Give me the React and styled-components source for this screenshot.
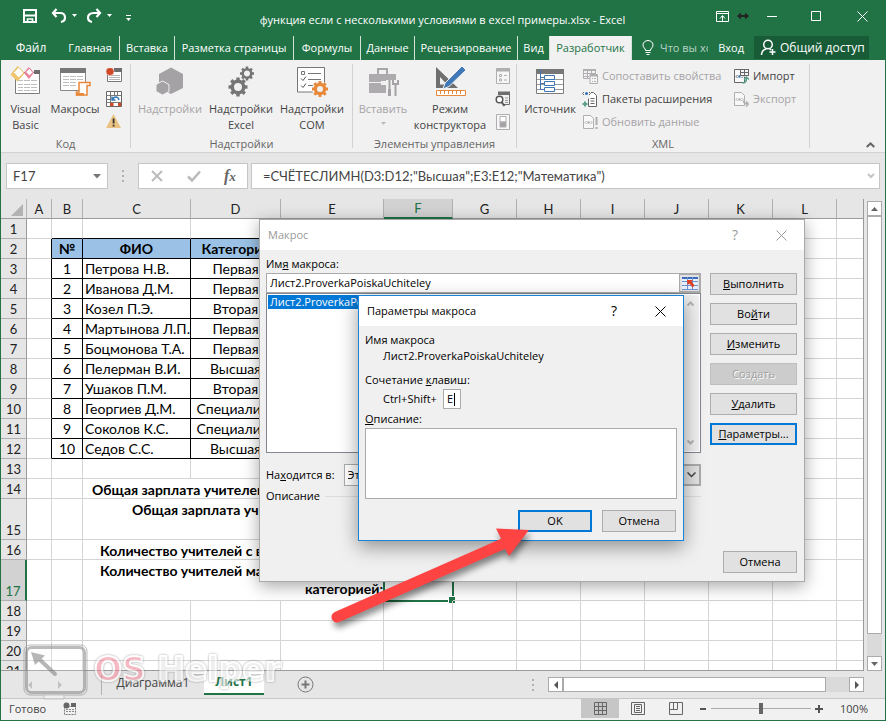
import React from "react";
import styled, { createGlobalStyle, css } from "styled-components";

const uiFont = `"Open Sans", "Noto Sans", sans-serif`;
const cellFont = `Lato, "Open Sans", sans-serif`;

const columns = [
  { name: "A", width: 25 },
  { name: "B", width: 31 },
  { name: "C", width: 108 },
  { name: "D", width: 90 },
  { name: "E", width: 103 },
  { name: "F", width: 69 },
  { name: "G", width: 64 },
  { name: "H", width: 64 },
  { name: "I", width: 64 },
  { name: "J", width: 64 },
  { name: "K", width: 64 },
  { name: "L", width: 64 },
];

const teachers = [
  ["Петрова Н.В.", "Первая"],
  ["Иванова Д.М.", "Первая"],
  ["Козел П.Э.", "Вторая"],
  ["Мартынова Л.П.", "Первая"],
  ["Боцмонова Т.А.", "Первая"],
  ["Пелерман В.И.", "Высшая"],
  ["Ушаков П.М.", "Вторая"],
  ["Георгиев Д.М.", "Специалист"],
  ["Соколов К.С.", "Специалист"],
  ["Седов С.С.", "Высшая"],
];

const totals = [
  { row: 14, height: 20, indent: 9, text: "Общая зарплата учителей" },
  { row: 15, height: 41, indent: 49, text: "Общая зарплата учителей" },
  { row: 16, height: 20, indent: 17, text: "Количество учителей с высшей" },
  {
    row: 17,
    height: 41,
    indent: 17,
    text: "Количество учителей математики",
    tail: "категорией:",
    value: "3",
  },
];

const tabs = [
  { name: "Главная", width: 59 },
  { name: "Вставка", width: 55 },
  { name: "Разметка страницы", width: 119 },
  { name: "Формулы", width: 67 },
  { name: "Данные", width: 54 },
  { name: "Рецензирование", width: 103 },
  { name: "Вид", width: 32 },
  { name: "Разработчик", width: 82, active: true },
];

const App = () => {
  return (
    <>
      <GlobalStyle />
      <Window>
        <TitleBar />
        <TabBar />
        <Ribbon />
        <FormulaBar />
        <Sheet />
        <SheetTabs />
        <StatusBar />
        <MacroDialog />
        <OptionsDialog />
        <Watermark />
        <PointerArrow />
      </Window>
    </>
  );
};

export default App;

/* ---------- title and tabs ---------- */

const TitleBar = () => (
  <Title>
    <QuickAccess>
      <IconButton aria-label="Сохранить">
        <svg width="16" height="16" viewBox="0 0 16 16" fill="none" stroke="#fff">
          <path d="M2 2h12v12H2z" strokeWidth="2" />
          <path d="M3 7.500h10" strokeWidth="2" />
          <path d="M5.500 15v-4h5v4" strokeWidth="1.600" />
        </svg>
      </IconButton>
      <IconButton aria-label="Отменить">
        <svg width="26" height="16" viewBox="0 0 26 16" fill="none" stroke="#fff">
          <path d="M6.500 1L3 5l3.500 4" strokeWidth="2.200" />
          <path d="M3 5h7c3.500 0 5 2 5 4.500 0 2.500-1.500 4-4 4.500" strokeWidth="2.200" />
          <path d="M22 6h5l-2.500 3z" fill="#fff" stroke="none" />
        </svg>
      </IconButton>
      <IconButton aria-label="Вернуть">
        <svg width="26" height="16" viewBox="0 0 26 16" fill="none" stroke="#fff">
          <path d="M8.500 1L12 5 8.500 9" strokeWidth="2.200" />
          <path d="M12 5H5.500C2 5 0 7 0 9.500 0 12 1.500 13.500 4 14" strokeWidth="2.200" />
          <path d="M19 6h5l-2.500 3z" fill="#fff" stroke="none" />
        </svg>
      </IconButton>
      <IconButton aria-label="Настройка панели">
        <svg width="7" height="16" viewBox="0 0 7 16">
          <path d="M0 7h5v1H0zM0 10h5l-2.500 3z" fill="#fff" />
        </svg>
      </IconButton>
    </QuickAccess>
    <Caption>функция если с несколькими условиями в excel примеры.xlsx - Excel</Caption>
    <WindowButtons>
      <svg width="14" height="11" viewBox="0 0 14 11" fill="none" stroke="#fff">
        <path d="M.5.5h12v10H.5zM0 2.500h13M6.500 10V5M4 7.500l2.500-3 2.500 3" />
      </svg>
      <svg width="12" height="8" viewBox="0 0 12 8" fill="#222">
        <path d="M0 4l4-3.500v2.500h4V.5L12 4 8 7.500V5H4v2.500z" />
      </svg>
      <IconButton aria-label="Свернуть" $width={42}>
        <svg width="10" height="12" stroke="#fff">
          <path d="M0 6.500h10" />
        </svg>
      </IconButton>
      <IconButton aria-label="Развернуть" $width={46}>
        <svg width="10" height="10" stroke="#fff" fill="none">
          <path d="M.5.5h9v9h-9z" />
        </svg>
      </IconButton>
      <IconButton aria-label="Закрыть" $width={46}>
        <svg width="11" height="11" stroke="#fff" fill="none">
          <path d="M.5.5l10 10M10.500.5l-10 10" />
        </svg>
      </IconButton>
    </WindowButtons>
  </Title>
);

const TabBar = () => (
  <TabRow>
    <FileTab>Файл</FileTab>
    {tabs.map((tab) => (
      <Tab key={tab.name} $width={tab.width} $active={tab.active}>
        {tab.name}
      </Tab>
    ))}
    <TellMe>
      <svg width="12" height="16" viewBox="0 0 12 16" fill="none" stroke="#fff">
        <path d="M3.500 10.500C3.500 8 1 8 1 5a5 4.500 0 0 1 10 0c0 3-2.500 3-2.500 5.500zM3.500 12.500h5M4.500 14.500h3" />
      </svg>
      <TellMeInput aria-label="Что вы хотите сделать?" placeholder="Что вы хотите сделать?" />
    </TellMe>
    <SignIn>Вход</SignIn>
    <Share>
      <svg width="17" height="17" viewBox="0 0 17 17" fill="none" stroke="#fff" strokeWidth="1.500">
        <circle cx="8" cy="5.500" r="4.300" />
        <path d="M1.500 16c0-3.500 2-5.500 5-6.300M9.500 9.500l1.500 1.500M12.500 10v6M9.500 13h6" />
      </svg>
      Общий доступ
    </Share>
  </TabRow>
);

/* ---------- ribbon ---------- */

const Ribbon = () => (
  <RibbonBar>
    <Group $width={129} $pad={3}>
      <GroupBody>
        <BigButton $width={43}>
          <VisualBasicIcon />
          Visual Basic
        </BigButton>
        <BigButton $width={56}>
          <MacrosIcon />
          Макросы
        </BigButton>
        <SmallColumn>
          <IconButton aria-label="Запись макроса">
            <RecordIcon />
          </IconButton>
          <IconButton aria-label="Относительные ссылки">
            <RelativeIcon />
          </IconButton>
          <IconButton aria-label="Безопасность макросов">
            <WarningIcon />
          </IconButton>
        </SmallColumn>
      </GroupBody>
      <GroupName>Код</GroupName>
    </Group>
    <Divider />
    <Group $width={221} $pad={3}>
      <GroupBody>
        <BigButton $width={72} disabled>
          <AddinsIcon />
          Надстройки
        </BigButton>
        <BigButton $width={70}>
          <GearsIcon />
          Надстройки Excel
        </BigButton>
        <BigButton $width={72}>
          <ComIcon />
          Надстройки COM
        </BigButton>
      </GroupBody>
      <GroupName>Надстройки</GroupName>
    </Group>
    <Divider />
    <Group $width={163} $pad={5}>
      <GroupBody>
        <BigButton $width={50} disabled>
          <ToolboxIcon />
          Вставить
          <svg width="7" height="12" viewBox="0 0 7 12">
            <path d="M1 5h5L3.500 8z" fill="#bbb" />
          </svg>
        </BigButton>
        <BigButton $width={84}>
          <DesignIcon />
          Режим конструктора
        </BigButton>
        <SmallColumn>
          <IconButton aria-label="Свойства">
            <PropertiesIcon />
          </IconButton>
          <IconButton aria-label="Просмотр кода">
            <CodeIcon />
          </IconButton>
          <IconButton aria-label="Диалоговое окно">
            <RunDialogIcon />
          </IconButton>
        </SmallColumn>
      </GroupBody>
      <GroupName>Элементы управления</GroupName>
    </Group>
    <Divider />
    <Group $width={292} $pad={5}>
      <GroupBody>
        <BigButton $width={56}>
          <SourceIcon />
          Источник
        </BigButton>
        <ListColumn $width={147}>
          <ListButton disabled>
            <MapIcon />
            Сопоставить свойства
          </ListButton>
          <ListButton>
            <PackIcon />
            Пакеты расширения
          </ListButton>
          <ListButton disabled>
            <XmlFileIcon color="#b1aeb1" mark="alert" />
            Обновить данные
          </ListButton>
        </ListColumn>
        <ListColumn $width={70}>
          <ListButton>
            <XmlFileIcon color="#666" accent="#5aa287" mark="import" />
            Импорт
          </ListButton>
          <ListButton disabled>
            <XmlFileIcon color="#b1aeb1" mark="export" />
            Экспорт
          </ListButton>
        </ListColumn>
      </GroupBody>
      <GroupName>XML</GroupName>
    </Group>
    <Divider />
    <CollapseButton aria-label="Свернуть ленту">
      <svg width="9" height="6" viewBox="0 0 9 6" fill="none" stroke="#666" strokeWidth="2">
        <path d="M.7 5l3.800-3.600L8.300 5" />
      </svg>
    </CollapseButton>
  </RibbonBar>
);

const VisualBasicIcon = () => (
  <svg width="32" height="32" viewBox="0 0 32 32" fill="none">
    <path d="M5.500 6.500h24v21h-24z" fill="#fff" stroke="#7d7d7d" />
    <path d="M24 4h6v4h-6z" fill="#6d6d6d" />
    <path d="M8 14.500h19M8 18.500h19M8 21.500h19M8 24.500h19" stroke="#bdbdbd" />
    <path d="M13.500 9v16M20.500 9v16" stroke="#fff" />
    <path d="M7.500 0l7 7.500-7 8-7-7z" fill="#f1c56d" />
    <path d="M8.500 1l5.500 6-5.500 5-5-5.500z" fill="#fff" stroke="#e9bf6a" />
    <path d="M18.500 1l5 6-4.500 6-5-6z" fill="#ee8095" />
    <path d="M19.500 2l3.500 4.500-3.500 3.500-4-4z" fill="#fff" stroke="#e8738c" />
  </svg>
);

const MacrosIcon = () => (
  <svg width="32" height="32" viewBox="0 0 32 32" fill="none">
    <path d="M1.500 2.500h25v22h-25z" fill="#fff" stroke="#8a8a8a" />
    <path d="M1 2h26v5H1z" fill="#777" />
    <path d="M4 10.500h20M4 13.500h20M4 16.500h14M4 19.500h14" stroke="#c0c0c0" />
    <path d="M10.500 8v14M17.500 8v14" stroke="#fff" />
    <path d="M20 26V16.500h11v3h-3V29H17.500v-3z" fill="#fff" stroke="#e8883a" strokeWidth="1.500" />
    <path d="M17 27h8v2.500h-8z" fill="#e8883a" />
  </svg>
);

const RecordIcon = () => (
  <svg width="16" height="16" viewBox="0 0 16 16" fill="none">
    <path d="M1.500 3.500h14v10h-14z" fill="#fff" stroke="#777" />
    <path d="M8 0h8v4H8z" fill="#6d6d6d" />
    <path d="M3 7.500h11M3 9.500h11M3 11.500h11" stroke="#b5b5b5" />
    <circle cx="4" cy="3.500" r="4" fill="#d24726" stroke="#f1f1f1" strokeWidth=".5" />
  </svg>
);

const RelativeIcon = () => (
  <svg width="16" height="16" viewBox="0 0 16 16" fill="none">
    <path d="M.5.5h15v15H.5z" fill="#fff" stroke="#666" />
    <path d="M0 4.500h16M4.500 0v16M11.500 0v5M8.500 0v5M0 11.500h16M0 8.500h5" stroke="#777" />
    <path d="M4 12h3.500v3H4zM12 12h3v3h-3z" fill="#d24726" />
    <path d="M5 5h10v6H5z" fill="#fff" />
    <path d="M6 9c2-4 6-4 7 0M6 5.500V9h3.500" stroke="#2e75b6" strokeWidth="1.400" />
  </svg>
);

const WarningIcon = () => (
  <svg width="16" height="16" viewBox="0 0 16 16">
    <path d="M7.500 0L15 14H0z" fill="#eac282" />
    <path d="M6.700 4.500h1.800v5H6.700zM6.700 10.700h1.800v1.800H6.700z" fill="#333" />
  </svg>
);

const AddinsIcon = () => (
  <svg width="32" height="32" viewBox="0 0 32 32">
    <path d="M17 1.500l12 6.500v14L17 28 5 21.500V8z" fill="#a5a2a5" />
    <path d="M8.500 15l6.500 3.500v7L8.500 29 2 25.500v-7z" fill="#a5a2a5" stroke="#f1f1f1" />
  </svg>
);

const Gear = ({ cx, cy, r, hole, color }) => (
  <g>
    {[0, 45, 90, 135, 180, 225, 270, 315].map((angle) => (
      <rect
        key={angle}
        x={cx - r * 0.18}
        y={cy - r}
        width={r * 0.36}
        height={r * 0.5}
        fill={color}
        transform={`rotate(${angle} ${cx} ${cy})`}
      />
    ))}
    <circle cx={cx} cy={cy} r={(hole + r * 0.78) / 2} fill="none" stroke={color} strokeWidth={r * 0.78 - hole} />
  </g>
);

const GearsIcon = () => (
  <svg width="32" height="32" viewBox="0 0 32 32">
    <Gear cx={13} cy={21} r={9.5} hole={4} color="#757575" />
    <Gear cx={22} cy={7.5} r={7} hole={3} color="#757575" />
  </svg>
);

const ComIcon = () => (
  <svg width="32" height="32" viewBox="0 0 32 32" fill="none">
    <path d="M1.500 1.500h27V26h-27z" fill="#fff" stroke="#777" />
    <path d="M5.500 5.500h3v3h-3zM12 7.500h13M12 13.500h13M12 19.500h7" stroke="#777" />
    <path d="M5 12.500l2 2 3-4M5 19.500l2 2 3-4" stroke="#555" />
    <circle cx="24" cy="23" r="8" fill="#f1f1f1" />
    <Gear cx={24} cy={23} r={8} hole={3} color="#e8883a" />
  </svg>
);

const ToolboxIcon = () => (
  <svg width="32" height="32" viewBox="0 0 32 32" fill="none">
    <path d="M11 8V3h9v5" stroke="#a9a6a9" strokeWidth="2" />
    <path d="M2 8h27v19H2z" fill="#aeabae" />
    <path d="M2 16.500h12M19 16.500h10" stroke="#f1f1f1" />
    <path d="M14 15h5v4h-5z" fill="#f1f1f1" />
    <path d="M19 14h12v17H19z" fill="#f1f1f1" />
    <path d="M22.500 14v9" stroke="#a5a2a5" strokeWidth="2" />
    <path d="M21 23h3v7h-3z" fill="#a5a2a5" />
    <path d="M28.500 19v11M26 14v4h5v-4" stroke="#a5a2a5" strokeWidth="2" />
  </svg>
);

const DesignIcon = () => (
  <svg width="32" height="32" viewBox="0 0 32 32" fill="none">
    <path d="M2 1v21h22zM6 11l7 7.500H6z" fill="#6f6f6f" fillRule="evenodd" />
    <path d="M28 0l4 4-17 16.500-6 2.500 2-6z" fill="#4179b8" stroke="#f1f1f1" />
    <path d="M2.500 24.500h29v5h-29z" fill="#fff" stroke="#e8883a" />
    <path d="M6.500 25v3M10.500 25v3M14.500 25v3M18.500 25v3M22.500 25v3M26.500 25v3" stroke="#e8883a" />
  </svg>
);

const PropertiesIcon = () => (
  <svg width="16" height="16" viewBox="0 0 16 16" fill="none" stroke="#b1aeb1">
    <path d="M1.500.5h13v15h-13z" fill="#f6f6f6" />
    <path d="M1 2h14" strokeWidth="3" />
    <path d="M4.500 6.500h2v2h-2zM4.500 11h2v2h-2zM9 7.500h3M9 12h3" />
  </svg>
);

const CodeIcon = () => (
  <svg width="16" height="16" viewBox="0 0 16 16" fill="none">
    <path d="M3 .5h12V4H3z" fill="#6d6d6d" />
    <path d="M8 13.500h6.500V3" stroke="#6d6d6d" />
    <path d="M10 7h3M10 9.500h3M10 11.500h3" stroke="#999" />
    <circle cx="4.500" cy="8.500" r="3.300" fill="#fff" stroke="#555" strokeWidth="1.500" />
    <path d="M6.500 11l3 4" stroke="#555" strokeWidth="2" />
  </svg>
);

const RunDialogIcon = () => (
  <svg width="16" height="16" viewBox="0 0 16 16" fill="none" stroke="#b1aeb1">
    <path d="M1.500.5h13v15h-13z" fill="#f6f6f6" />
    <path d="M5 2.500h6v5.500H5z" fill="#fff" />
    <path d="M5 8h6v5H5z" fill="#a5a2a5" />
  </svg>
);

const SourceIcon = () => (
  <svg width="32" height="32" viewBox="0 0 32 32" fill="none">
    <path d="M2.500 3.500h27v24h-27z" fill="#fff" stroke="#7d7d7d" />
    <path d="M2 3h28v5H2z" fill="#777" />
    <path d="M3 13.500h26M3 18.500h26M3 23.500h26" stroke="#999" />
    <path d="M6.500 3v20.500h4M6.500 11.500h4M6.500 17.500h4" stroke="#3f77b5" />
    <path d="M10.500 9.500h10v4h-10zM10.500 15.500h10v4h-10zM10.500 21.500h10v4h-10z" fill="#fff" stroke="#3f77b5" />
  </svg>
);

const MapIcon = () => (
  <svg width="16" height="16" viewBox="0 0 16 16" fill="none" stroke="#b1aeb1">
    <path d="M1.500 1.500h12v9h-12zM1 5.500h12M1 8.500h6M5.500 1v10M9.500 1v4" />
    <path d="M1 2h13" strokeWidth="2" />
    <path d="M8 6.500h7.500v9H8z" fill="#f6f6f6" />
    <path d="M8 7.500h7.500" strokeWidth="2" />
    <path d="M10 10.500h1M12 10.500h2M10 13.500h1M12 13.500h2" />
  </svg>
);

const PackIcon = () => (
  <svg width="16" height="16" viewBox="0 0 16 16" fill="none" stroke="#666">
    <path d="M6.500 7.500v8h8v-11l-3-3H9" fill="#fff" />
    <path d="M8.500 7.500h4M8.500 10h4M8.500 12.500h4" />
    <path d="M2 1L.5 2.500 2 4M7 1l1.500 1.500L7 4" />
    <circle cx="4.500" cy="2.500" r="1.500" fill="#2e75b6" stroke="none" />
    <path d="M.5 13h5M3 10.500v5" stroke="#5aa287" strokeWidth="2" />
  </svg>
);

const marks = {
  alert: <path d="M14.500 3v8M14.500 13v2" strokeWidth="2" />,
  import: <path d="M9.500 15c3 0 4-2 4-5M11 11.500l2.500-2.500 2.500 2.500" strokeWidth="1.500" />,
  export: <path d="M10.500 9.500c0 3 1.500 3.500 4.500 3.500M13 10.500l2.500 2.500-2.500 2.500" strokeWidth="1.500" />,
};

const XmlFileIcon = ({ color, accent = color, mark }) => (
  <svg width="16" height="16" viewBox="0 0 16 16" fill="none" stroke={color}>
    <path d="M1.500 1.500h7l3 3v10h-10z" fill="#f8f8f8" />
    <path d="M4.500 7L3 8.500 4.500 10M8.500 7L10 8.500 8.500 10" />
    <circle cx="6.500" cy="8.500" r="1.300" fill={mark === "import" ? "#2e75b6" : color} stroke="none" />
    {mark === "import" && (
      <>
        <path d="M7 .5h9v8H7z" fill="#f8f8f8" stroke="none" />
        <path d="M7 1.500h9M7.500 2v5M11.500 2v6M15.500 2v6M7 4.500h9M7 7.500h9" />
      </>
    )}
    <g stroke={accent}>{marks[mark]}</g>
  </svg>
);

/* ---------- formula bar and sheet ---------- */

const FormulaBar = () => (
  <FormulaRow>
    <NameBox>
      <NameInput aria-label="Имя" defaultValue="F17" />
      <svg width="8" height="5" viewBox="0 0 8 5">
        <path d="M0 0h8L4 4.500z" fill="#777" />
      </svg>
    </NameBox>
    <Grip />
    <FormulaButtons>
      <IconButton aria-label="Отмена">
        <svg width="12" height="12" viewBox="0 0 12 12" stroke="#bababa" strokeWidth="2">
          <path d="M1 1l10 10M11 1L1 11" />
        </svg>
      </IconButton>
      <IconButton aria-label="Ввод">
        <svg width="14" height="12" viewBox="0 0 14 12" fill="none" stroke="#bababa" strokeWidth="2.500">
          <path d="M1 6.500l4 4L13 1.500" />
        </svg>
      </IconButton>
      <FxButton>
        f<small>x</small>
      </FxButton>
    </FormulaButtons>
    <FormulaField>
      <FormulaInput aria-label="Строка формул" defaultValue={'=СЧЁТЕСЛИМН(D3:D12;"Высшая";E3:E12;"Математика")'} />
      <svg width="8" height="6" viewBox="0 0 8 6" fill="none" stroke="#c4c4c4" strokeWidth="2">
        <path d="M1 1l3 3 3-3" />
      </svg>
    </FormulaField>
  </FormulaRow>
);

const PlainCells = ({ from }) => (
  <>
    {columns.slice(from).map((column) => (
      <Cell key={column.name} />
    ))}
    <Cell $last />
  </>
);

const Sheet = () => (
  <SheetArea>
    <GridPane>
      <Grid>
        <colgroup>
          <Col $width={26} />
          {columns.map((column) => (
            <Col key={column.name} $width={column.width} />
          ))}
          <col />
        </colgroup>
        <thead>
          <tr>
            <Corner aria-label="Выделить все">
              <svg width="12" height="12" viewBox="0 0 12 12">
                <path d="M12 0v12H0z" fill="#b2b2b2" />
              </svg>
            </Corner>
            {columns.map((column) => (
              <ColumnHead key={column.name} $selected={column.name === "F"}>
                {column.name}
              </ColumnHead>
            ))}
            <ColumnHead $last />
          </tr>
        </thead>
        <tbody>
          <tr>
            <RowHead>1</RowHead>
            <Cell />
            <Cell $blackBottom />
            <Cell $blackBottom />
            <Cell $blackBottom />
            <PlainCells from={4} />
          </tr>
          <tr>
            <RowHead>2</RowHead>
            <Cell $blackRight />
            <TableHead>№</TableHead>
            <TableHead>ФИО</TableHead>
            <TableHead>Категория</TableHead>
            <PlainCells from={4} />
          </tr>
          {teachers.map(([name, category], index) => (
            <tr key={name}>
              <RowHead>{index + 3}</RowHead>
              <Cell $blackRight />
              <Cell $blackRight $blackBottom>
                {index + 1}
              </Cell>
              <Cell $blackRight $blackBottom $left>
                {name}
              </Cell>
              <Cell $blackRight $blackBottom>
                {category}
              </Cell>
              <PlainCells from={4} />
            </tr>
          ))}
          <tr>
            <RowHead>13</RowHead>
            <PlainCells from={0} />
          </tr>
          {totals.map((total) => (
            <tr key={total.row}>
              <RowHead $height={total.height} $selected={total.row === 17}>
                {total.row}
              </RowHead>
              <Cell />
              <Cell />
              <TotalCell colSpan={3}>
                <TotalText $indent={total.indent}>{total.text}</TotalText>
                {total.tail && <TotalTail>{total.tail}</TotalTail>}
              </TotalCell>
              <Cell $active={total.row === 17}>{total.value}</Cell>
              <PlainCells from={6} />
            </tr>
          ))}
          {[18, 19, 20, 21].map((row) => (
            <tr key={row}>
              <RowHead>{row}</RowHead>
              <PlainCells from={0} />
            </tr>
          ))}
        </tbody>
      </Grid>
    </GridPane>
    <VerticalScroll>
      <ScrollButton aria-label="Вверх">
        <svg width="7" height="4">
          <path d="M3.500 0L7 4H0z" fill="#666" />
        </svg>
      </ScrollButton>
      <ScrollTrack $vertical>
        <ScrollThumb />
      </ScrollTrack>
      <ScrollButton aria-label="Вниз">
        <svg width="7" height="4">
          <path d="M0 0h7L3.500 4z" fill="#666" />
        </svg>
      </ScrollButton>
    </VerticalScroll>
  </SheetArea>
);

const SheetTabs = () => (
  <SheetTabRow>
    <SheetNav>
      <svg width="34" height="8" viewBox="0 0 34 8" fill="#b5b5b5">
        <path d="M4 0v8L0 4zM30 0v8l4-4z" />
      </svg>
    </SheetNav>
    <SheetTab>Диаграмма1</SheetTab>
    <SheetTab $active>Лист1</SheetTab>
    <AddSheet aria-label="Новый лист">
      <svg width="17" height="17" viewBox="0 0 17 17" fill="none" stroke="#777">
        <circle cx="8.500" cy="8.500" r="7.500" />
        <path d="M4.500 8.500h8M8.500 4.500v8" strokeWidth="2" />
      </svg>
    </AddSheet>
    <Grip />
    <HorizontalScroll>
      <ScrollButton aria-label="Влево">
        <svg width="4" height="8">
          <path d="M4 0v8L0 4z" fill="#555" />
        </svg>
      </ScrollButton>
      <ScrollTrack>
        <ScrollThumb />
      </ScrollTrack>
      <ScrollButton aria-label="Вправо">
        <svg width="4" height="8">
          <path d="M0 0v8l4-4z" fill="#555" />
        </svg>
      </ScrollButton>
    </HorizontalScroll>
  </SheetTabRow>
);

const StatusBar = () => (
  <Status>
    <span>Готово</span>
    <IconButton aria-label="Запись макроса">
      <svg width="14" height="14" viewBox="0 0 14 14" fill="none">
        <path d="M1.500 4.500h11v8h-11z" stroke="#777" strokeDasharray="2 1" />
        <path d="M8 1h5v4H8z" fill="#666" />
        <path d="M3 7.500h9M3 9.500h9" stroke="#888" strokeDasharray="2 1" />
        <circle cx="3.500" cy="3.500" r="3" fill="#666" />
      </svg>
    </IconButton>
    <ViewButtons>
      <ViewButton aria-label="Обычный" $active>
        <svg width="13" height="13" viewBox="0 0 13 13" fill="none" stroke="#666">
          <path d="M.5.5h12v12H.5zM.5 4.500h12M.5 8.500h12M4.500.5v12M8.500.5v12" />
        </svg>
      </ViewButton>
      <ViewButton aria-label="Разметка страницы">
        <svg width="14" height="13" viewBox="0 0 14 13" fill="none" stroke="#666">
          <path d="M.5.5h13v12H.5zM3.500 2.500h7v8h-7zM5 4.500h4M5 6.500h4M5 8.500h4" />
        </svg>
      </ViewButton>
      <ViewButton aria-label="Страничный">
        <svg width="14" height="13" viewBox="0 0 14 13" fill="none" stroke="#666">
          <path d="M.5.5h13v12H.5zM.5 7.500h8V.5M4.500.5v7" />
        </svg>
      </ViewButton>
    </ViewButtons>
    <ZoomButton aria-label="Уменьшить">
      <svg width="8" height="8" stroke="#555" strokeWidth="2">
        <path d="M1 4h6" />
      </svg>
    </ZoomButton>
    <ZoomRange type="range" min="0" max="200" defaultValue="100" aria-label="Масштаб" />
    <ZoomButton aria-label="Увеличить">
      <svg width="8" height="8" stroke="#555" strokeWidth="2">
        <path d="M0 4h8M4 0v8" />
      </svg>
    </ZoomButton>
    <ZoomValue>100%</ZoomValue>
  </Status>
);

/* ---------- dialogs ---------- */

const CloseIcon = () => (
  <svg width="11" height="11" viewBox="0 0 11 11" stroke="currentColor">
    <path d="M.5.5l10 10M10.500.5l-10 10" />
  </svg>
);

const MacroDialog = () => (
  <MacroWindow role="dialog" aria-label="Макрос">
    <DialogTitle $inactive>
      <span>Макрос</span>
      <DialogIcon>?</DialogIcon>
      <DialogIcon aria-label="Закрыть">
        <CloseIcon />
      </DialogIcon>
    </DialogTitle>
    <MacroBody>
      <MacroMain>
        <FieldLabel htmlFor="macro-name">
          Им<u>я</u> макроса:
        </FieldLabel>
        <MacroNameRow>
          <MacroNameInput id="macro-name" defaultValue="Лист2.ProverkaPoiskaUchiteley" />
          <PickButton aria-label="Выбрать ссылку">
            <svg width="16" height="13" viewBox="0 0 16 13" fill="none">
              <path d="M0 0h16v13H0z" fill="#e8effa" />
              <path d="M0 1h16" stroke="#3b6cc0" strokeWidth="2" />
              <path d="M0 4.500h16M0 8.500h16M0 12.500h16M5.500 0v13M10.500 0v13" stroke="#6d93d2" />
              <path d="M5 3h6L9.500 4.500l3 4-2 2-3-4L5.500 8z" fill="#e0401f" />
            </svg>
          </PickButton>
        </MacroNameRow>
        <MacroList role="listbox" aria-label="Макросы">
          <MacroItem role="option" aria-selected="true">
            Лист2.ProverkaPoiskaUchiteley
          </MacroItem>
          <ListScroll>
            <svg width="7" height="6" viewBox="0 0 7 6" fill="none" stroke="#b5b5b5" strokeWidth="2">
              <path d="M.5 4.500l3-3 3 3" />
            </svg>
            <svg width="7" height="6" viewBox="0 0 7 6" fill="none" stroke="#b5b5b5" strokeWidth="2">
              <path d="M.5 1.500l3 3 3-3" />
            </svg>
          </ListScroll>
        </MacroList>
        <LocationRow>
          <label htmlFor="macro-place">
            На<u>х</u>одится в:
          </label>
          <SelectWrap>
            <PlaceSelect id="macro-place">
              <option>Эта книга</option>
            </PlaceSelect>
            <SelectArrow>
              <svg width="9" height="6" viewBox="0 0 9 6" fill="none" stroke="#444" strokeWidth="1.500">
                <path d="M.5.5l4 4 4-4" />
              </svg>
            </SelectArrow>
          </SelectWrap>
        </LocationRow>
        <SectionLine>Описание</SectionLine>
      </MacroMain>
      <MacroActions>
        <DialogButton>
          <span><u>В</u>ыполнить</span>
        </DialogButton>
        <DialogButton>
          <span>Во<u>й</u>ти</span>
        </DialogButton>
        <DialogButton>
          <span><u>И</u>зменить</span>
        </DialogButton>
        <DialogButton disabled>Создать</DialogButton>
        <DialogButton>
          <span><u>У</u>далить</span>
        </DialogButton>
        <DialogButton $primary>
          <span><u>П</u>араметры...</span>
        </DialogButton>
      </MacroActions>
    </MacroBody>
    <MacroFooter>
      <DialogButton $width={74}>Отмена</DialogButton>
    </MacroFooter>
  </MacroWindow>
);

const OptionsDialog = () => (
  <OptionsWindow role="dialog" aria-label="Параметры макроса">
    <DialogTitle>
      <span>Параметры макроса</span>
      <DialogIcon>?</DialogIcon>
      <DialogIcon aria-label="Закрыть">
        <CloseIcon />
      </DialogIcon>
    </DialogTitle>
    <OptionsBody>
      <div>Имя макроса</div>
      <Indented>Лист2.ProverkaPoiskaUchiteley</Indented>
      <ShortcutLabel htmlFor="shortcut">
        Сочетание <u>к</u>лавиш:
      </ShortcutLabel>
      <ShortcutRow>
        Ctrl+Shift+
        <KeyBox>
          <KeyInput id="shortcut" defaultValue="E" size="1" />
          <Caret />
        </KeyBox>
      </ShortcutRow>
      <DescriptionLabel htmlFor="description">
        <u>О</u>писание:
      </DescriptionLabel>
      <Description id="description" />
      <OptionsFooter>
        <DialogButton $width={74} $primary>
          OK
        </DialogButton>
        <DialogButton $width={74}>Отмена</DialogButton>
      </OptionsFooter>
    </OptionsBody>
  </OptionsWindow>
);

const Watermark = () => (
  <WatermarkSvg width="264" height="60" viewBox="0 0 264 60" fill="none">
    <rect x="2" y="2" width="63" height="50" rx="6" stroke="#8c8c8c" />
    <rect x="4.500" y="4.500" width="58" height="45" rx="5" fill="#fff" fillOpacity=".3" stroke="#8f8f8f" strokeWidth="3" />
    <path d="M22 52h20v4H22z" fill="#f5f5f5" stroke="#aaa" />
    <path d="M33 31L16 15" stroke="#888" strokeWidth="4" strokeLinecap="round" />
    <path d="M9 9l14 3.500-10 9.500z" fill="#888" />
    <text x="72" y="38">
      <tspan fill="#f08c9e">OS</tspan> <tspan fill="#e6e6e6">Helper</tspan>
    </text>
  </WatermarkSvg>
);

const PointerArrow = () => (
  <ArrowSvg width="210" height="110" viewBox="0 0 210 110">
    <path d="M12 92L180 18" stroke="#fe4343" strokeWidth="11" strokeLinecap="round" />
    <path d="M204 5l-33-1.500 4.500 9L179 22l5 9z" fill="#fe4343" />
  </ArrowSvg>
);

/* ---------- styles ---------- */

const GlobalStyle = createGlobalStyle`
  * {
    box-sizing: border-box;
  }
  body {
    margin: 0;
    font-family: ${uiFont};
    font-size: 11px;
    line-height: 16px;
    color: #000;
  }
  button, input, select, textarea {
    font: inherit;
    color: inherit;
    margin: 0;
    padding: 0;
    border: 0;
    border-radius: 0;
    background: none;
    outline: none;
  }
`;

const Window = styled.div`
  position: relative;
  display: flex;
  flex-direction: column;
  height: 100vh;
  overflow: hidden;
  border: 1px solid #217346;
  border-top: 0;
  background: #e6e6e6;
`;

const IconButton = styled.button`
  display: flex;
  align-items: center;
  justify-content: center;
  width: ${({ $width }) => ($width ? `${$width}px` : "auto")};
`;

const Title = styled.header`
  display: flex;
  height: 36px;
  background: #217346;
  color: #fff;
`;

const QuickAccess = styled.div`
  display: flex;
  align-items: center;
  gap: 12px;
  width: 168px;
  height: 32px;
  padding-left: 21px;

  svg {
    overflow: visible;
  }
`;

const Caption = styled.div`
  flex: 1;
  padding-top: 12px;
  text-align: center;
  white-space: nowrap;
`;

const WindowButtons = styled.div`
  display: flex;
  align-items: center;
  height: 32px;

  svg + svg {
    margin: 0 2px 0 7px;
  }
`;

const TabRow = styled.nav`
  display: flex;
  height: 24px;
  padding-right: 16px;
  background: #217346;
  color: #fff;
`;

const FileTab = styled.button`
  width: 60px;
  color: #fff;
  font-size: 12px;
`;

const Tab = styled.button`
  width: ${({ $width }) => $width}px;
  border-right: 1px solid #d3e3da;
  color: ${({ $active }) => ($active ? "#217346" : "#fff")};
  background: ${({ $active }) => ($active ? "#f1f1f1" : "none")};
  white-space: nowrap;
`;

const TellMe = styled.label`
  display: flex;
  align-items: center;
  flex: 1;
  min-width: 0;
  gap: 6px;
  padding-left: 10px;
`;

const TellMeInput = styled.input`
  flex: 1;
  min-width: 0;
  &::placeholder {
    color: #b9d2c5;
    opacity: 1;
  }
`;

const SignIn = styled.button`
  padding: 0 10px;
`;

const Share = styled.button`
  display: flex;
  align-items: center;
  gap: 3px;
  height: 23px;
  width: 115px;
  padding-left: 6px;
  background: #185c37;
  font-size: 12px;
  white-space: nowrap;
`;

const RibbonBar = styled.section`
  display: flex;
  height: 93px;
  border-bottom: 1px solid #d2d2d2;
  background: #f1f1f1;
  color: #444;
`;

const GroupBody = styled.div`
  display: flex;
`;

const Group = styled.div`
  display: flex;
  flex-direction: column;
  justify-content: space-between;
  flex: none;
  width: ${({ $width }) => $width}px;
  padding-top: 4px;

  ${GroupBody} {
    padding-left: ${({ $pad }) => $pad}px;
  }
`;

const GroupName = styled.div`
  text-align: center;
  color: #666;
`;

const Divider = styled.div`
  width: 1px;
  margin: 4px 0;
  background: #d2d0d2;
`;

const BigButton = styled.button`
  display: flex;
  flex-direction: column;
  align-items: center;
  align-self: flex-start;
  width: ${({ $width }) => $width}px;
  padding-top: 2px;
  color: ${({ disabled }) => (disabled ? "#a6a3a6" : "#444")};

  > svg:first-child {
    margin-bottom: 3px;
  }
`;

const SmallColumn = styled.div`
  display: flex;
  flex-direction: column;
  margin-left: 3px;

  button {
    height: 23px;
  }
`;

const ListColumn = styled.div`
  width: ${({ $width }) => $width}px;
  margin-left: 4px;
`;

const ListButton = styled.button`
  display: flex;
  align-items: center;
  gap: 4px;
  height: 23px;
  color: ${({ disabled }) => (disabled ? "#a6a3a6" : "#444")};
  white-space: nowrap;
`;

const CollapseButton = styled.button`
  align-self: flex-end;
  height: 16px;
  margin: 0 10px 0 auto;
`;

const FormulaRow = styled.section`
  display: flex;
  align-items: center;
  height: 46px;
  padding: 0 5px;
  font-family: ${cellFont};
  font-size: 13px;
  color: #444;
`;

const fieldBox = css`
  display: flex;
  align-items: center;
  height: 26px;
  border: 1px solid #c6c6c6;
  background: #fff;
`;

const NameBox = styled.div`
  ${fieldBox}
  width: 102px;
  padding: 0 6px;
`;

const NameInput = styled.input`
  flex: 1;
  min-width: 0;
`;

const Grip = styled.div`
  width: 2px;
  height: 12px;
  margin: 0 14px;
  background: repeating-linear-gradient(#b0b0b0 0 2px, transparent 2px 5px);
`;

const FormulaButtons = styled.div`
  ${fieldBox}
  width: 110px;
  padding: 0 11px 0 12px;
  justify-content: space-between;
`;

const FxButton = styled.button`
  font-family: "Liberation Serif", serif;
  font-style: italic;
  font-weight: bold;
  font-size: 16px;
  color: #666;
`;

const FormulaField = styled.div`
  ${fieldBox}
  flex: 1;
  margin-left: 3px;
  padding: 0 4px 0 11px;
`;

const FormulaInput = styled.input`
  flex: 1;
  min-width: 0;
`;

const SheetArea = styled.main`
  display: flex;
  flex: 1;
  min-height: 0;
  font-family: ${cellFont};
  font-size: 14px;
`;

const GridPane = styled.div`
  flex: 1;
  overflow: hidden;
  border-right: 1px solid #9b9b9b;
  border-bottom: 1px solid #9b9b9b;
  background: #fff;
`;

const Grid = styled.table`
  width: 100%;
  table-layout: fixed;
  border-collapse: separate;
  border-spacing: 0;

  th, td {
    padding: 0;
    line-height: 18px;
  }
`;

const Col = styled.col`
  width: ${({ $width }) => $width}px;
`;

const Corner = styled.th`
  height: 20px;
  border-right: 1px solid #b5b5b5;
  border-bottom: 1px solid #9b9b9b;
  background: #e6e6e6;

  svg {
    display: block;
    margin: 3px 3px 0 auto;
  }
`;

const ColumnHead = styled.th`
  height: 20px;
  border-right: ${({ $last }) => ($last ? "0" : "1px solid #b0b0b0")};
  border-bottom: ${({ $selected }) => ($selected ? "2px solid #217346" : "1px solid #9b9b9b")};
  background: ${({ $selected }) => ($selected ? "#d2d2d2" : "#e6e6e6")};
  color: ${({ $selected }) => ($selected ? "#217346" : "#222")};
  font-size: 13px;
  font-weight: normal;
`;

const RowHead = styled.th`
  height: ${({ $height }) => $height || 20}px;
  border-right: ${({ $selected }) => ($selected ? "2px solid #217346" : "1px solid #9b9b9b")};
  border-bottom: 1px solid #b0b0b0;
  background: ${({ $selected }) => ($selected ? "#d2d2d2" : "#e6e6e6")};
  color: ${({ $selected }) => ($selected ? "#217346" : "#222")};
  font-size: 13px;
  font-weight: normal;
  vertical-align: bottom;
`;

const Cell = styled.td`
  position: relative;
  border-right: ${({ $last, $blackRight }) => ($last ? "0" : `1px solid ${$blackRight ? "#000" : "#d4d4d4"}`)};
  border-bottom: 1px solid ${({ $blackBottom }) => ($blackBottom ? "#000" : "#d4d4d4")};
  text-align: ${({ $left }) => ($left ? "left" : "center")};
  white-space: nowrap;

  && {
    padding-left: ${({ $left }) => ($left ? "2px" : "0")};
  }

  ${({ $active }) =>
    $active &&
    css`
      outline: 2px solid #217346;
      outline-offset: -1px;

      &::after {
        content: "";
        position: absolute;
        right: -3px;
        bottom: -3px;
        width: 6px;
        height: 6px;
        border: 1px solid #fff;
        border-width: 1px 0 0 1px;
        background: #217346;
      }
    `}
`;

const TableHead = styled(Cell).attrs({ as: "th", $blackRight: true, $blackBottom: true })`
  background: #9bc2e6;
  font-weight: bold;
`;

const TotalCell = styled(Cell)`
  font-weight: bold;

  && {
    padding-top: 1px;
    line-height: 20px;
    vertical-align: top;
  }
`;

const TotalText = styled.div`
  height: 18px;
  padding-left: ${({ $indent }) => $indent}px;
  text-align: left;
`;

const TotalTail = styled.div`
  text-align: right;
`;

const VerticalScroll = styled.div`
  display: flex;
  flex-direction: column;
  width: 21px;
  padding: 2px 3px 0;
`;

const HorizontalScroll = styled.div`
  display: flex;
  width: 316px;
  height: 15px;
  margin-right: 21px;
`;

const ScrollButton = styled.button`
  display: flex;
  align-items: center;
  justify-content: center;
  flex: none;
  width: 15px;
  height: 15px;
  border: 1px solid #ababab;
  background: #fff;
`;

const ScrollThumb = styled.div`
  border: 1px solid #ababab;
  background: #fff;
`;

const ScrollTrack = styled.div`
  display: flex;
  flex-direction: ${({ $vertical }) => ($vertical ? "column" : "row")};
  flex: 1;
  width: ${({ $vertical }) => ($vertical ? "15px" : "auto")};
  background: #dadada;

  ${ScrollThumb} {
    flex: 0 0 ${({ $vertical }) => ($vertical ? "95%" : "92%")};
  }
`;

const SheetTabRow = styled.section`
  display: flex;
  align-items: center;
  height: 27px;
`;

const SheetNav = styled.div`
  display: flex;
  align-items: center;
  width: 101px;
  height: 20px;
  padding-left: 27px;
  border-right: 1px solid #b0b0b0;
`;

const SheetTab = styled.button`
  align-self: flex-start;
  width: ${({ $active }) => ($active ? "60px" : "102px")};
  height: 24px;
  border-bottom: ${({ $active }) => ($active ? "2px solid #217346" : "0")};
  background: ${({ $active }) => ($active ? "#fff" : "none")};
  color: ${({ $active }) => ($active ? "#217346" : "#444")};
  font-size: 12px;
  font-weight: ${({ $active }) => ($active ? "bold" : "normal")};
  line-height: 22px;
`;

const AddSheet = styled(IconButton)`
  margin: 0 auto 0 33px;
`;

const Status = styled.footer`
  display: flex;
  align-items: center;
  gap: 17px;
  height: 22px;
  padding: 0 17px 2px 8px;
  border-top: 1px solid #c6c6c6;
  background: #f1f1f1;
  color: #444;
`;

const ViewButtons = styled.div`
  display: flex;
  height: 100%;
  margin: 0 -13px 0 auto;
`;

const ViewButton = styled(IconButton)`
  width: 38px;
  background: ${({ $active }) => ($active ? "#c6c6c6" : "none")};
`;

const ZoomButton = styled(IconButton)`
  width: 8px;
`;

const ZoomRange = styled.input`
  width: 100px;
  height: 12px;
  margin: 0 -13px;
  appearance: none;
  background: linear-gradient(#ababab, #ababab) center / 100% 1px no-repeat;

  &::-webkit-slider-thumb {
    appearance: none;
    width: 4px;
    height: 11px;
    background: #666;
  }
`;

const ZoomValue = styled.span`
  width: 28px;
  text-align: right;
`;

const dialogFrame = css`
  position: absolute;
  background: #f0f0f0;
`;

const MacroWindow = styled.div`
  ${dialogFrame}
  left: 258px;
  top: 219px;
  width: 546px;
  border: 1px solid #aaa;
  box-shadow: 0 4px 16px rgba(0, 0, 0, 0.35);
`;

const OptionsWindow = styled.div`
  ${dialogFrame}
  left: 357px;
  top: 295px;
  width: 326px;
  border: 1px solid #1883d7;
  box-shadow: 0 6px 18px rgba(0, 0, 0, 0.4);
`;

const DialogTitle = styled.div`
  display: flex;
  align-items: center;
  height: 30px;
  padding-left: 8px;
  background: #fff;
  color: ${({ $inactive }) => ($inactive ? "#999" : "#000")};

  span {
    flex: 1;
  }
`;

const DialogIcon = styled(IconButton)`
  width: 46px;
  font-size: 14px;
`;

const MacroBody = styled.div`
  display: flex;
  gap: 9px;
  padding: 0 7px 0 6px;
`;

const MacroMain = styled.div`
  flex: 1;
  min-width: 0;
  padding-top: 5px;
`;

const FieldLabel = styled.label`
  display: block;
  height: 18px;
  line-height: 18px;
`;

const MacroNameRow = styled.div`
  display: flex;
  height: 20px;
  border: 1px solid #ababab;
  background: #fff;
`;

const MacroNameInput = styled.input`
  flex: 1;
  padding-left: 3px;
`;

const PickButton = styled(IconButton)`
  width: 21px;
  border: 1px solid #ababab;
  background: #e1e1e1;
`;

const MacroList = styled.ul`
  display: grid;
  grid-template-columns: 1fr 18px;
  height: 160px;
  margin: 0;
  padding: 1px;
  border: 1px solid #828790;
  background: #fff;
  list-style: none;
`;

const MacroItem = styled.li`
  height: 14px;
  padding-left: 2px;
  background: #0078d7;
  color: #fff;
  line-height: 14px;
`;

const ListScroll = styled.li`
  display: flex;
  flex-direction: column;
  align-items: center;
  justify-content: space-between;
  padding: 6px 0;
  background: #f0f0f0;
`;

const LocationRow = styled.div`
  display: flex;
  align-items: center;
  gap: 9px;
  height: 22px;
  margin-top: 11px;
  white-space: nowrap;
`;

const SelectWrap = styled.div`
  position: relative;
  display: flex;
  flex: 1;
  height: 22px;
`;

const PlaceSelect = styled.select`
  flex: 1;
  padding-left: 3px;
  border: 1px solid #ababab;
  background: #fff;
  appearance: none;
`;

const SelectArrow = styled.span`
  position: absolute;
  top: 0;
  right: 0;
  display: flex;
  align-items: center;
  justify-content: center;
  width: 20px;
  height: 22px;
  border: 2px solid #ababab;
  background: #e1e1e1;
  pointer-events: none;
`;

const SectionLine = styled.div`
  display: flex;
  align-items: center;
  gap: 5px;
  height: 20px;

  &::after {
    content: "";
    flex: 1;
    height: 1px;
    background: #dcdcdc;
  }
`;

const MacroActions = styled.div`
  display: flex;
  flex-direction: column;
  gap: 8px;
  width: 87px;
  padding-top: 23px;
`;

const DialogButton = styled.button`
  width: ${({ $width }) => ($width ? `${$width}px` : "100%")};
  height: 22px;
  border: ${({ $primary }) => ($primary ? "2px solid #0078d7" : "1px solid #adadad")};
  background: #e1e1e1;

  &:disabled {
    border-color: #bfbfbf;
    background: #ccc;
    color: #a0a0a0;
    text-shadow: 1px 1px 0 #fff;
  }
`;

const MacroFooter = styled.div`
  display: flex;
  justify-content: flex-end;
  padding: 45px 7px 8px;
`;

const OptionsBody = styled.div`
  padding: 6px 6px 8px;
`;

const Indented = styled.div`
  padding-left: 18px;
`;

const ShortcutLabel = styled.label`
  display: block;
  margin-top: 8px;
`;

const ShortcutRow = styled.div`
  display: flex;
  align-items: center;
  gap: 6px;
  margin-top: 1px;
  padding-left: 18px;
`;

const KeyBox = styled.div`
  display: flex;
  align-items: center;
  width: 18px;
  height: 20px;
  padding-left: 3px;
  border: 1px solid #ababab;
  background: #fff;
`;

const KeyInput = styled.input`
  width: 7px;
`;

const Caret = styled.span`
  width: 1px;
  height: 13px;
  background: #000;
`;

const DescriptionLabel = styled.label`
  display: block;
  margin-top: 2px;
`;

const Description = styled.textarea`
  display: block;
  width: 100%;
  height: 71px;
  margin-top: 1px;
  border: 1px solid #ababab;
  background: #fff;
  resize: none;
`;

const OptionsFooter = styled.div`
  display: flex;
  justify-content: flex-end;
  gap: 10px;
  margin-top: 11px;
  padding-right: 1px;
`;

const WatermarkSvg = styled.svg`
  position: absolute;
  left: 21px;
  bottom: 17px;
  font-family: "DejaVu Sans", sans-serif;
  font-size: 33px;
  font-weight: bold;
  opacity: 0.6;
  pointer-events: none;

  text {
    stroke: #fff;
    stroke-width: 2px;
    stroke-linejoin: round;
    filter: drop-shadow(0 0 1px #666);
  }
`;

const ArrowSvg = styled.svg`
  position: absolute;
  left: 324px;
  top: 525px;
  filter: drop-shadow(2px 5px 3px rgba(0, 0, 0, 0.45));
  pointer-events: none;
`;
